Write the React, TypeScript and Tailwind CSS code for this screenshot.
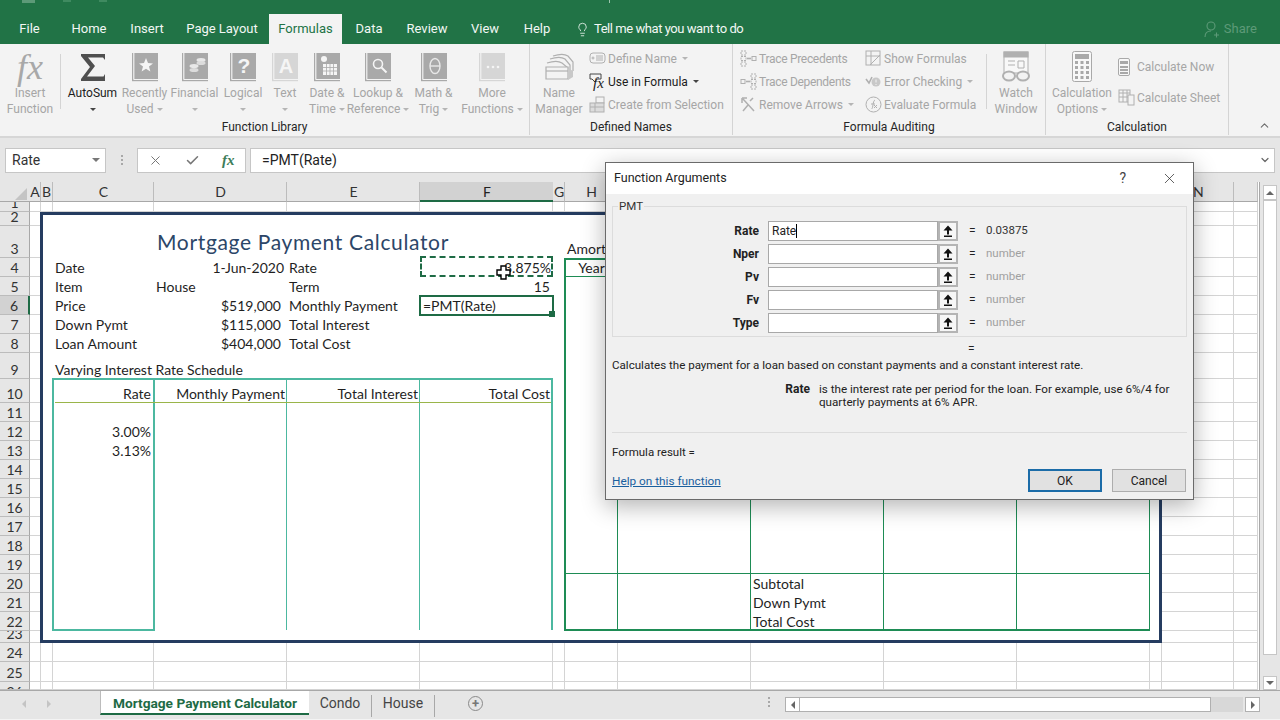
import { ReactNode } from 'react';
import { Lightbulb, X, ChevronUp, ChevronDown, Check } from 'lucide-react';

const colHeads = ['A', 'B', 'C', 'D', 'E', 'F', 'G', 'H', 'I', 'J', 'K', 'L', 'M', 'N', ''];
const rowNums = Array.from({ length: 26 }, (_, i) => i + 1);

function Book({ children, light }: { children?: ReactNode; light?: boolean }) {
  const c = light ? '#d6d6d6' : '#a9a9a9';
  return (
    <svg width="26" height="30" viewBox="0 0 26 30">
      <rect x="2" y="1" width="24" height="26" fill={c} />
      <rect x="0" y="1" width="1.4" height="28" fill={c} />
      <rect x="0" y="28" width="26" height="1.2" fill={c} />
      <rect x="1.4" y="1" width="1" height="26" fill="#efefef" />
      {children}
    </svg>
  );
}

function Large({ w, label, label2, arrow, active, children }: { w: string; label: string; label2?: string; arrow?: boolean; active?: boolean; children: ReactNode }) {
  return (
    <div className={`${w} flex flex-col items-center shrink-0`}>
      <div className="h-[33px] mt-[6px] flex items-center justify-center">{children}</div>
      <div className={`mt-[2px] leading-[16px] text-[12px] whitespace-nowrap ${active ? 'text-[#1c1c1c]' : 'text-[#a6a6a6]'}`}>{label}</div>
      <div className={`leading-[16px] text-[12px] whitespace-nowrap flex items-center gap-[3px] h-[16px] ${active ? 'text-[#1c1c1c]' : 'text-[#a6a6a6]'}`}>
        {label2}
        {arrow && <Caret active={active} />}
      </div>
    </div>
  );
}

function Caret({ active }: { active?: boolean }) {
  return <span className={`inline-block w-0 h-0 border-x-[3px] border-x-transparent border-t-[3px] ${active ? 'border-t-[#444]' : 'border-t-[#b5b5b5]'}`} />;
}

function Small({ icon, label, caret, active, tight }: { icon: ReactNode; label: string; caret?: boolean; active?: boolean; tight?: boolean }) {
  return (
    <div className={`flex items-center h-[23px] text-[12px] whitespace-nowrap ${active ? 'text-[#1c1c1c]' : 'text-[#a6a6a6]'}`}>
      <span className="w-[19px] h-[18px] flex items-center shrink-0">{icon}</span>
      <span className={tight ? 'tracking-[-0.3px]' : ''}>{label}</span>
      {caret && <span className="ml-[5px] flex"><Caret active={active} /></span>}
    </div>
  );
}

function Ico({ children }: { children: ReactNode }) {
  return (
    <svg width="17" height="17" viewBox="0 0 17 17" fill="none" stroke="#b0b0b0" strokeWidth="1">
      {children}
    </svg>
  );
}

function Group({ w, label, children }: { w: string; label: string; children: ReactNode }) {
  return (
    <div className={`${w} shrink-0 flex flex-col border-r border-[#d4d4d4] mb-[1px]`}>
      <div className="flex flex-1">{children}</div>
      <div className="h-[15px] text-center text-[12px] leading-[15px] text-[#262626]">{label}</div>
    </div>
  );
}

function Ribbon() {
  return (
    <div className="h-[94px] bg-[#f3f3f3] border-b-2 border-[#d6d6d6] flex relative shrink-0">
      <Group w="w-[530px]" label="Function Library">
        <Large w="w-[60px]" label="Insert" label2="Function">
          <span className="font-['Liberation_Serif',serif] italic text-[36px] leading-[30px] text-[#a8a8a8]">fx</span>
        </Large>
        <div className="w-px h-[55px] mt-[10px] bg-[#d4d4d4]" />
        <div className="w-[5px]" />
        <Large w="w-[53px]" label="AutoSum" arrow active>
          <svg width="26" height="28" viewBox="0 0 26 28">
            <path d="M1 1H25V7L23 4.5H8L15 13L7 23.5H23.5L25 21V28H1V26L10 14L1 3Z" fill="#4f4f4f" />
          </svg>
        </Large>
        <Large w="w-[51px]" label="Recently" label2="Used" arrow>
          <Book><path d="M14 6l2 5 5 .4-4 3.2 1.4 5-4.4-2.8-4.4 2.8 1.4-5-4-3.2 5-.4z" fill="#f5f5f5" /></Book>
        </Large>
        <Large w="w-[49px]" label="Financial" arrow>
          <Book>
            <ellipse cx="19" cy="8" rx="4.5" ry="2" fill="#e8e8e8" />
            <ellipse cx="19" cy="11" rx="4.5" ry="2" fill="#dcdcdc" />
            <ellipse cx="12" cy="14" rx="4.5" ry="2" fill="#e8e8e8" />
            <ellipse cx="12" cy="18" rx="4.5" ry="2" fill="#dcdcdc" />
          </Book>
        </Large>
        <Large w="w-[48px]" label="Logical" arrow>
          <Book><text x="14" y="21" textAnchor="middle" fontSize="21" fontWeight="700" fontFamily="Liberation Sans" fill="#f5f5f5">?</text></Book>
        </Large>
        <Large w="w-[36px]" label="Text" arrow>
          <Book light><text x="14" y="21" textAnchor="middle" fontSize="20" fontFamily="Liberation Sans" fontWeight="700" fill="#f5f5f5">A</text></Book>
        </Large>
        <Large w="w-[48px]" label="Date &" label2="Time" arrow>
          <Book>
            <circle cx="10" cy="7" r="3" fill="#f5f5f5" />
            <rect x="9" y="12" width="14" height="11" fill="#f5f5f5" />
            <path d="M9 15.5h14M9 19h14M12.5 12v11M16 12v11M19.5 12v11" stroke="#a9a9a9" strokeWidth="0.8" />
          </Book>
        </Large>
        <Large w="w-[54px]" label="Lookup &" label2="Reference" arrow>
          <Book><circle cx="13" cy="12" r="4.5" fill="none" stroke="#f5f5f5" strokeWidth="1.6" /><path d="M16.5 15.5l5 5" stroke="#f5f5f5" strokeWidth="2" /></Book>
        </Large>
        <Large w="w-[57px]" label="Math &" label2="Trig" arrow>
          <Book><ellipse cx="14" cy="14" rx="5" ry="7.5" fill="none" stroke="#e8e8e8" strokeWidth="1.4" /><path d="M9 14h10" stroke="#e8e8e8" strokeWidth="1.4" /></Book>
        </Large>
        <Large w="w-[60px]" label="More" label2="Functions" arrow>
          <Book light><circle cx="9" cy="15" r="1.3" fill="#f5f5f5" /><circle cx="14" cy="15" r="1.3" fill="#f5f5f5" /><circle cx="19" cy="15" r="1.3" fill="#f5f5f5" /></Book>
        </Large>
      </Group>

      <Group w="w-[203px]" label="Defined Names">
        <Large w="w-[58px]" label="Name" label2="Manager">
          <svg width="30" height="28" viewBox="0 0 30 28" fill="none" stroke="#b0b0b0" strokeWidth="1.2">
            <path d="M9 3c6-2 12-2 15 0l5 6v9M6 6c6-2 12-2 15 0l5 6v11M3 10c6-2 12-2 15 0l6 5v11" />
            <path d="M2 14h22v12H2z" fill="#f3f3f3" />
            <path d="M24 15l5 3v6l-5 3z" fill="#c8c8c8" stroke="none" />
            <path d="M2 18h22" />
          </svg>
        </Large>
        <div className="flex flex-col mt-[3px] ml-[1px]">
          <Small label="Define Name" caret icon={<Ico><rect x="1" y="3" width="15" height="10" rx="3" /><circle cx="4" cy="8" r="1" /><path d="M7 6h7M7 8h7M7 10h7" /></Ico>} />
          <Small
            label="Use in Formula"
            caret
            active
            icon={
              <span className="relative w-[18px] h-[18px]">
                <svg className="absolute left-0 top-0" width="13" height="10" viewBox="0 0 13 10" fill="none" stroke="#444" strokeWidth="1">
                  <path d="M1 1h11v5H8L6 9 3 6H1z" />
                </svg>
                <span className="absolute left-[4px] top-[3px] font-['Liberation_Serif',serif] italic text-[15px] leading-none text-[#222]">fx</span>
              </span>
            }
          />
          <Small label="Create from Selection" icon={<Ico><rect x="7" y="1" width="8" height="6" /><rect x="1" y="7" width="14" height="9" fill="#dcdcdc" /><path d="M1 11h14M6 7v9" /></Ico>} />
        </div>
      </Group>

      <Group w="w-[313px]" label="Formula Auditing">
        <div className="flex flex-col mt-[3px] ml-[7px] w-[125px]">
          <Small tight label="Trace Precedents" icon={<Ico><path d="M1 1h5v4H1zM1 12h5v4H1zM1 6.500h5v4H1z" strokeDasharray="2 1" /><rect x="12" y="6.500" width="4" height="4" /><path d="M7 8.500h4" strokeWidth="1.600" /></Ico>} />
          <Small tight label="Trace Dependents" icon={<Ico><rect x="1" y="6.500" width="4" height="4" /><path d="M11 1h5v4h-5zM11 12h5v4h-5zM11 6.500h5v4h-5z" strokeDasharray="2 1" /><path d="M6 8.500h4" strokeWidth="1.600" /></Ico>} />
          <Small label="Remove Arrows" caret icon={<Ico><path d="M3 3l11 12M2 2h5M2 2v5M3 15l5-6M13 2l-3 3" strokeWidth="1.500" /></Ico>} />
        </div>
        <div className="flex flex-col mt-[3px] w-[121px]">
          <Small label="Show Formulas" icon={<Ico><rect x="1" y="1" width="14" height="14" /><path d="M1 6h14M6 1v14M5 15L15 5" /></Ico>} />
          <Small label="Error Checking" caret icon={<Ico><path d="M1 6l3 4 3-6" strokeWidth="1.600" /><circle cx="11" cy="9" r="4.500" fill="#c8c8c8" stroke="none" /><path d="M11 6.500v3M11 11v1" stroke="#f3f3f3" /></Ico>} />
          <Small label="Evaluate Formula" icon={<Ico><circle cx="8.500" cy="8.500" r="7.500" /><path d="M6.500 13c2-1 1-8 3.500-9M6 8h4M9 9l3 3M12 9l-3 3" /></Ico>} />
        </div>
        <div className="w-px h-[55px] mt-[10px] bg-[#d4d4d4]" />
        <Large w="w-[58px]" label="Watch" label2="Window">
          <svg width="30" height="31" viewBox="0 0 30 31" fill="none" stroke="#b0b0b0" strokeWidth="1">
            <rect x="3" y="1" width="24" height="21" fill="#f8f8f8" />
            <rect x="3" y="1" width="24" height="5" fill="#b0b0b0" />
            <path d="M7 10h7M7 14h7M17 10h6v7h-6z" />
            <ellipse cx="8" cy="25" rx="6" ry="4.5" strokeWidth="2" fill="#f3f3f3" />
            <ellipse cx="22" cy="25" rx="6" ry="4.500" strokeWidth="2" fill="#f3f3f3" />
          </svg>
        </Large>
      </Group>

      <Group w="w-[183px]" label="Calculation">
        <Large w="w-[72px]" label="Calculation" label2="Options" arrow>
          <svg width="20" height="31" viewBox="0 0 20 31">
            <rect x="0.500" y="0.500" width="19" height="30" rx="2" fill="#f8f8f8" stroke="#a9a9a9" />
            <rect x="3" y="3" width="14" height="5" fill="#a9a9a9" />
            <path d="M3 10h3v3H3zM8.500 10h3v3h-3zM14 10h3v3h-3zM3 15h3v3H3zM8.500 15h3v3h-3zM14 15h3v3h-3zM3 20h3v3H3zM8.500 20h3v3h-3zM14 20h3v3h-3zM3 25h3v3H3zM8.500 25h3v3h-3zM14 25h3v3h-3z" fill="#a9a9a9" />
          </svg>
        </Large>
        <div className="flex flex-col mt-[11px] gap-[8px]">
          <Small label="Calculate Now" icon={<svg width="12" height="18" viewBox="0 0 12 18"><rect x="0.500" y="0.500" width="11" height="17" rx="1.500" fill="#f8f8f8" stroke="#a9a9a9" /><path d="M2 3h8v3H2zM2 8h8v2H2zM2 11h8v2H2zM2 14h8v2H2z" fill="#a9a9a9" /></svg>} />
          <Small label="Calculate Sheet" icon={<Ico><rect x="1" y="1" width="11" height="12" /><path d="M1 4h11M1 8h11M5 1v12M9 1v12" /><rect x="10" y="6" width="6" height="10" fill="#f3f3f3" /></Ico>} />
        </div>
      </Group>
      <div className="flex-1 flex items-end justify-end pr-[9px] pb-[4px]">
        <ChevronUp size={13} strokeWidth={2} className="text-[#6b6b6b]" />
      </div>
    </div>
  );
}

function TitleBar() {
  const tabs = [
    ['File', 'w-[59px]'],
    ['Home', 'w-[60px]'],
    ['Insert', 'w-[56px]'],
    ['Page Layout', 'w-[94px]'],
  ];
  const tabs2 = [
    ['Data', 'w-[54px]'],
    ['Review', 'w-[62px]'],
    ['View', 'w-[54px]'],
    ['Help', 'w-[50px]'],
  ];
  return (
    <div className="h-[44px] bg-[#217346] flex flex-col shrink-0 text-[13px] text-[#f2f7f4]">
      <div className="h-[14px] flex items-start pl-[22px] gap-[28px]">
        <div className="w-[13px] h-[3px] bg-[#5d9a78]" />
        <div className="w-[8px] h-[2px] bg-[#3f8a60]" />
        <div className="w-[8px] h-[2px] bg-[#3f8a60]" />
        <div className="w-px h-[3px] bg-[#9cc4ad] ml-[474px]" />
      </div>
      <div className="flex h-[30px] items-center">
        {tabs.map(([t, w]) => (
          <div key={t} className={`${w} text-center`}>{t}</div>
        ))}
        <div className="w-[73px] h-[30px] bg-[#f3f3f3] text-[#217346] text-center leading-[30px]">Formulas</div>
        {tabs2.map(([t, w]) => (
          <div key={t} className={`${w} text-center`}>{t}</div>
        ))}
        <div className="flex items-center ml-[13px] tracking-[-0.45px]">
          <Lightbulb size={15} strokeWidth={1.3} className="mr-[4px]" />
          Tell me what you want to do
        </div>
        <div className="ml-auto mr-[23px] flex items-center gap-[4px] text-[#5d9a78]">
          <svg width="16" height="18" viewBox="0 0 16 18" fill="none" stroke="#5d9a78" strokeWidth="1.100">
            <circle cx="7" cy="6" r="4" />
            <path d="M1 17c0-4 2-6 6-6M10 15h5M12.500 12.500v5" />
          </svg>
          Share
        </div>
      </div>
    </div>
  );
}

function FormulaBar() {
  return (
    <div className="h-[44px] bg-[#e6e6e6] flex items-center pl-[5px] pr-[5px] shrink-0">
      <div className="w-[101px] h-[25px] bg-white border border-[#c6c6c6] flex items-center justify-between pl-[6px] pr-[5px] text-[14px] text-[#333]">
        Rate
        <span className="inline-block w-0 h-0 border-x-[4px] border-x-transparent border-t-[4px] border-t-[#777]" />
      </div>
      <div className="w-[31px] flex flex-col items-center gap-[2px]">
        <div className="w-[2px] h-[2px] bg-[#a8a8a8]" />
        <div className="w-[2px] h-[2px] bg-[#a8a8a8]" />
        <div className="w-[2px] h-[2px] bg-[#a8a8a8]" />
      </div>
      <div className="w-[109px] h-[25px] bg-white border border-[#c6c6c6] flex items-center pl-[10px] gap-[22px] text-[#777]">
        <X size={15} strokeWidth={1.6} />
        <Check size={15} strokeWidth={2.4} />
        <span className="font-['Liberation_Serif',serif] italic font-bold text-[15px] text-[#3d7d5a]">fx</span>
      </div>
      <div className="ml-[4px] flex-1 h-[25px] bg-white border border-[#c6c6c6] flex items-center justify-between pl-[11px] pr-[3px] text-[14px] text-[#222]">
        =PMT(Rate)
        <ChevronDown size={12} strokeWidth={2.4} className="text-[#666]" />
      </div>
    </div>
  );
}

function Sheet() {
  return (
    <div className="flex-1 grid grid-cols-[30px_11px_12px_101px_133px_133px_133px_12px_53px_133px_133px_133px_133px_12px_72px_24px] grid-rows-[20px_10px_14px_32px_repeat(5,19px)_26px_24px_repeat(12,19px)_12px_19px_20px_8px] font-[Lato,sans-serif] text-[14px] text-[#1f1f1f] overflow-hidden">
      {/* column heads */}
      <div className="col-start-1 row-start-1 bg-[#e6e6e6] border-b border-[#a8a8a8] flex items-end justify-end pr-[3px] pb-[1px]">
        <div className="w-0 h-0 border-l-[12px] border-l-transparent border-b-[12px] border-b-[#c4c4c4]" />
      </div>
      {colHeads.map((c, i) => (
        <div
          key={i}
          style={{ gridColumn: i + 2, gridRow: 1 }}
          className={`flex items-center justify-center overflow-hidden leading-none pt-[1px] ${c === 'F' ? 'bg-[#d2d2d2] border-b-2 border-[#1e6b45] text-[#222]' : 'bg-[#e6e6e6] border-b border-[#a8a8a8] border-r border-r-[#bcbcbc] text-[#333]'} ${c.length && i > 1 ? 'pl-[1px]' : ''} ${c === 'N' ? 'justify-start pl-[31px]' : ''}`}
        >
          {c}
        </div>
      ))}
      {/* row heads and empty cells */}
      {rowNums.map((r) => (
        <div
          key={r}
          style={{ gridColumn: 1, gridRow: r + 1 }}
          className={`flex justify-center overflow-hidden border-b border-[#bcbcbc] text-[#333] leading-[19px] ${r === 26 ? 'items-start' : 'items-end'} ${r === 6 ? 'bg-[#d2d2d2] border-r-2 border-r-[#1e6b45]' : 'bg-[#e6e6e6] border-r border-r-[#a8a8a8]'}`}
        >
          <span className="shrink-0 -mb-px">{r}</span>
        </div>
      ))}
      {rowNums.flatMap((r) =>
        colHeads.map((c, i) => (
          <div key={`${i}-${r}`} style={{ gridColumn: i + 2, gridRow: r + 1 }} className="border-r border-b border-[#d4d4d4]" />
        ))
      )}

      {/* print area frame */}
      <div className="col-start-3 col-span-12 row-start-3 row-span-22 -ml-px bg-white border-[3px] border-[#253c60]" />

      <div className="col-start-4 col-span-4 row-start-4 self-center text-center text-[21px] tracking-[0.65px] text-[#2c4668] leading-none -mt-[1px]">Mortgage Payment Calculator</div>

      <div className="col-start-4 row-start-5 self-end pl-[2px] leading-[19px]">Date</div>
      <div className="col-start-5 row-start-5 self-end text-right pr-[3px] leading-[19px] whitespace-nowrap">1-Jun-2020</div>
      <div className="col-start-6 row-start-5 self-end pl-[2px] leading-[19px]">Rate</div>
      <div className="col-start-7 row-start-5 self-end text-right leading-[19px] border-2 border-dashed border-[#1e6b45] h-[21px] -mt-[1px]">3.875%</div>

      <div className="col-start-4 row-start-6 self-end pl-[2px] leading-[19px]">Item</div>
      <div className="col-start-5 row-start-6 self-end pl-[2px] leading-[19px]">House</div>
      <div className="col-start-6 row-start-6 self-end pl-[2px] leading-[19px]">Term</div>
      <div className="col-start-7 row-start-6 self-end text-right pr-[3px] leading-[19px]">15</div>

      <div className="col-start-4 row-start-7 self-end pl-[2px] leading-[19px]">Price</div>
      <div className="col-start-5 row-start-7 self-end text-right pr-[6px] leading-[19px]">$519,000</div>
      <div className="col-start-6 row-start-7 self-end pl-[2px] leading-[19px] whitespace-nowrap">Monthly Payment</div>
      <div className="col-start-7 row-start-7 relative border-2 border-[#1e6b45] -mx-[1px] -my-[1px] pl-[2px] leading-[17px] bg-white">
        =PMT(Rate)
        <div className="absolute -right-[3px] -bottom-[3px] w-[6px] h-[6px] bg-[#1e6b45]" />
      </div>

      <div className="col-start-4 row-start-8 self-end pl-[2px] leading-[19px]">Down Pymt</div>
      <div className="col-start-5 row-start-8 self-end text-right pr-[6px] leading-[19px]">$115,000</div>
      <div className="col-start-6 row-start-8 self-end pl-[2px] leading-[19px]">Total Interest</div>

      <div className="col-start-4 row-start-9 self-end pl-[2px] leading-[19px]">Loan Amount</div>
      <div className="col-start-5 row-start-9 self-end text-right pr-[6px] leading-[19px]">$404,000</div>
      <div className="col-start-6 row-start-9 self-end pl-[2px] leading-[19px]">Total Cost</div>

      <div className="col-start-4 col-span-3 row-start-10 self-end pl-[2px] leading-[19px]">Varying Interest Rate Schedule</div>

      {/* varying rate table */}
      <div className="col-start-4 row-start-11 row-span-13 border-2 border-[#4cb8a0] -mr-px -ml-px -mt-px" />
      <div className="col-start-5 row-start-11 row-span-13 border-t-2 border-r border-[#4cb8a0] -mt-px mb-[1px]" />
      <div className="col-start-6 row-start-11 row-span-13 border-t-2 border-r border-[#4cb8a0] -mt-px mb-[1px]" />
      <div className="col-start-7 row-start-11 row-span-13 border-t-2 border-r-2 border-[#4cb8a0] -mt-px mb-[1px]" />
      <div className="col-start-4 col-span-4 row-start-11 border-b border-[#9ab54a] h-[24px] mx-[2px]" />
      <div className="col-start-4 row-start-11 self-end text-right pr-[3px] leading-[19px]">Rate</div>
      <div className="col-start-5 row-start-11 self-end text-right pr-[2px] leading-[19px] whitespace-nowrap">Monthly Payment</div>
      <div className="col-start-6 row-start-11 self-end text-right pr-[2px] leading-[19px]">Total Interest</div>
      <div className="col-start-7 row-start-11 self-end text-right pr-[3px] leading-[19px]">Total Cost</div>
      <div className="col-start-4 row-start-13 self-end text-right pr-[3px] leading-[19px]">3.00%</div>
      <div className="col-start-4 row-start-14 self-end text-right pr-[3px] leading-[19px]">3.13%</div>

      {/* amortization table */}
      <div className="col-start-9 col-span-5 row-start-4 self-end pl-[2px] leading-[19px] whitespace-nowrap">Amortization Schedule</div>
      <div className="col-start-9 row-start-5 row-span-19 border-y-2 border-l-2 border-r border-[#1e8c55] -ml-px" />
      <div className="col-start-10 row-start-5 row-span-19 border-y-2 border-r border-[#1e8c55]" />
      <div className="col-start-11 row-start-5 row-span-19 border-y-2 border-r border-[#1e8c55]" />
      <div className="col-start-12 row-start-5 row-span-19 border-y-2 border-r border-[#1e8c55]" />
      <div className="col-start-13 row-start-5 row-span-19 border-y-2 border-r border-[#1e8c55]" />
      <div className="col-start-9 row-start-5 border-b border-[#1e8c55] text-center leading-[19px]">Year</div>
      <div className="col-start-9 col-span-5 row-start-20 border-b border-[#1e8c55]" />
      <div className="col-start-11 row-start-21 self-end pl-[2px] leading-[19px]">Subtotal</div>
      <div className="col-start-11 row-start-22 self-end pl-[2px] leading-[19px]">Down Pymt</div>
      <div className="col-start-11 row-start-23 self-end pl-[2px] leading-[19px]">Total Cost</div>
    </div>
  );
}

function Scrollbar() {
  return (
    <div className="w-[21px] bg-[#e6e6e6] border-l border-[#a8a8a8] flex flex-col items-center pt-[3px]">
      <div className="w-[14px] h-[15px] bg-white border border-[#c6c6c6] flex items-center justify-center">
        <span className="w-0 h-0 border-x-[4px] border-x-transparent border-b-[4px] border-b-[#666]" />
      </div>
      <div className="w-[14px] h-[455px] bg-white border border-[#c6c6c6]" />
      <div className="flex-1" />
      <div className="w-[14px] h-[14px] bg-white border border-[#c6c6c6] flex items-center justify-center">
        <span className="w-0 h-0 border-x-[4px] border-x-transparent border-t-[4px] border-t-[#666]" />
      </div>
    </div>
  );
}

function SheetTabs() {
  return (
    <div className="h-[30px] shrink-0 bg-[#e6e6e6] border-t border-b border-t-[#a8a8a8] border-b-[#f4f4f4] flex font-[Roboto,sans-serif] text-[14px] text-[#444]">
      <div className="w-[100px] flex items-center pl-[22px] gap-[21px] pb-[3px]">
        <span className="w-0 h-0 border-y-[4px] border-y-transparent border-r-[4px] border-r-[#c4c4c4]" />
        <span className="w-0 h-0 border-y-[4px] border-y-transparent border-l-[4px] border-l-[#c4c4c4]" />
      </div>
      <div className="w-[209px] h-[24px] bg-white border-b-2 border-[#1e6b45] text-center font-bold text-[13.700px] text-[#1e6b45] leading-[24px] border-l border-l-[#bcbcbc]">Mortgage Payment Calculator</div>
      <div className="w-[63px] h-[22px] mt-[4px] border-r border-[#a8a8a8] text-center leading-[17px]">Condo</div>
      <div className="w-[63px] h-[22px] mt-[4px] border-r border-[#a8a8a8] text-center leading-[17px]">House</div>
      <div className="ml-[33px] mt-[5px] w-[15px] h-[15px] rounded-full border border-[#8a8a8a] flex items-center justify-center text-[13px] font-bold leading-none text-[#777]">+</div>
      <div className="ml-[285px] mt-[6px] flex flex-col gap-[2px] h-[12px]">
        <div className="w-[2px] h-[2px] bg-[#a8a8a8]" />
        <div className="w-[2px] h-[2px] bg-[#a8a8a8]" />
        <div className="w-[2px] h-[2px] bg-[#a8a8a8]" />
      </div>
      <div className="ml-[15px] mt-[6px] w-[475px] h-[15px] flex">
        <div className="w-[15px] bg-white border border-[#b0b0b0] flex items-center justify-center">
          <span className="w-0 h-0 border-y-[4px] border-y-transparent border-r-[4px] border-r-[#666]" />
        </div>
        <div className="w-[411px] bg-white border-y border-r border-[#b0b0b0]" />
        <div className="flex-1 bg-[#d8d8d8]" />
        <div className="w-[15px] ml-[2px] bg-white border border-[#b0b0b0] flex items-center justify-center">
          <span className="w-0 h-0 border-y-[4px] border-y-transparent border-l-[4px] border-l-[#666]" />
        </div>
      </div>
    </div>
  );
}

function ArgRow({ label, value, filled }: { label: string; value?: string; filled?: boolean }) {
  return (
    <div className="flex items-center h-[20px]">
      <div className="w-[146px] text-right font-bold text-[12px] text-[#222]">{label}</div>
      <div className="ml-[9px] w-[170px] h-[20px] bg-white border border-[#a8a8a8] flex items-center pl-[3px] text-[12px] text-[#222]">
        {filled && (
          <>
            Rate
            <span className="w-px h-[14px] bg-black" />
          </>
        )}
      </div>
      <div className="w-[20px] h-[20px] bg-[#f6f6f6] border-2 border-[#b4b4b4] flex items-center justify-center">
        <svg width="10" height="12" viewBox="0 0 10 12">
          <path d="M5 0.500L9.500 5.500H6V9.500H4V5.500H0.500Z M1 10.500H9V12H1Z" fill="#111" />
        </svg>
      </div>
      <div className="ml-[11px] w-[17px] text-[12px] text-[#222]">=</div>
      <div className={`text-[11.500px] ${filled ? 'text-[#333]' : 'text-[#a0a0a0]'}`}>{value}</div>
    </div>
  );
}

function Dialog() {
  return (
    <div className="absolute left-[605px] top-[162px] w-[589px] h-[338px] bg-[#f0f0f0] border border-[#6a6a6a] shadow-[0_6px_22px_rgba(0,0,0,0.3)] flex flex-col font-[Roboto,sans-serif] text-[#222]">
      <div className="h-[31px] bg-white flex items-center pl-[8px] text-[12.500px] shrink-0">
        Function Arguments
        <span className="ml-auto text-[14px] text-[#444] mr-[35px]">?</span>
        <X size={17} strokeWidth={1} className="mr-[15px] text-[#222]" />
      </div>
      <div className="mx-[6px] mt-[12px] h-[131px] border border-[#dcdcdc] relative pt-[14px] flex flex-col gap-[3px] shrink-0">
        <div className="absolute -top-[8px] left-[5px] bg-[#f0f0f0] px-[1px] text-[11.500px] leading-[14px] text-[#333]">PMT</div>
        <ArgRow label="Rate" value="0.03875" filled />
        <ArgRow label="Nper" value="number" />
        <ArgRow label="Pv" value="number" />
        <ArgRow label="Fv" value="number" />
        <ArgRow label="Type" value="number" />
      </div>
      <div className="h-[14px] mt-[5px] pl-[362px] text-[12px] leading-[14px]">=</div>
      <div className="pl-[6px] mt-[1px] text-[11.580px] leading-[16px] whitespace-nowrap">Calculates the payment for a loan based on constant payments and a constant interest rate.</div>
      <div className="flex mt-[10px] text-[11.650px] leading-[13px]">
        <div className="w-[204px] text-right font-bold text-[12px] shrink-0">Rate</div>
        <div className="ml-[9px] w-[360px]">is the interest rate per period for the loan. For example, use 6%/4 for quarterly payments at 6% APR.</div>
      </div>
      <div className="mx-[6px] mt-[23px] border-t border-[#dcdcdc] shrink-0" />
      <div className="pl-[6px] mt-[11px] text-[11.500px] leading-[16px]">Formula result =</div>
      <div className="flex items-center ml-[6px] mr-[7px] mt-[9px]">
        <span className="text-[11.800px] text-[#1a5f9e] underline mt-[2px]">Help on this function</span>
        <div className="ml-auto w-[74px] h-[23px] bg-[#e1e1e1] border-2 border-[#1b6ca8] text-[12px] flex items-center justify-center">OK</div>
        <div className="ml-[10px] w-[74px] h-[23px] bg-[#e1e1e1] border border-[#adadad] text-[12px] flex items-center justify-center">Cancel</div>
      </div>
    </div>
  );
}

export default function App() {
  return (
    <div className="relative w-[1280px] h-[720px] overflow-hidden flex flex-col bg-white font-[Roboto,sans-serif]">
      <TitleBar />
      <Ribbon />
      <FormulaBar />
      <div className="flex h-[508px] shrink-0">
        <Sheet />
        <Scrollbar />
      </div>
      <SheetTabs />
      <Dialog />
      {/* mouse cursor over F4 */}
      <svg className="absolute left-[496px] top-[265px]" width="15" height="15" viewBox="0 0 15 15">
        <path d="M5 1h5v4h4v5h-4v4H5v-4H1V5h4z" fill="#fff" stroke="#000" strokeWidth="1.400" />
      </svg>
    </div>
  );
}
